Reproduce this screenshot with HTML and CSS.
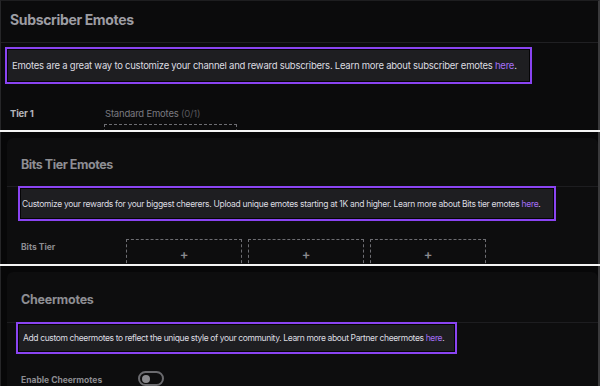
FILE: index.html
```html
<!DOCTYPE html>
<html>
<head>
<meta charset="utf-8">
<link rel="stylesheet" href="styles.css">
</head>
<body>
<div class="page">
  <section class="shot shot-sub">
    <div class="sub-head"><h1 class="sub-title">Subscriber Emotes</h1></div>
    <div class="note note-sub">
      <p class="note-text">Emotes are a great way to customize your channel and reward subscribers. Learn more about subscriber emotes <span class="link">here</span>.</p>
    </div>
    <div class="tier-row">
      <div class="tier-label">Tier 1</div>
      <div class="tier-col">
        <div class="std-label">Standard Emotes <span class="count">(0/1)</span></div>
        <div class="dash-box dash-std"></div>
      </div>
    </div>
  </section>
  <div class="sep"></div>
  <section class="shot shot-bits">
    <div class="card card-bits">
      <div class="card-head head-bits"><h2 class="card-title">Bits Tier Emotes</h2></div>
      <div class="note note-bits">
        <p class="note-text small">Customize your rewards for your biggest cheerers. Upload unique emotes starting at 1K and higher. Learn more about Bits tier emotes <span class="link">here</span>.</p>
      </div>
      <div class="bits-row">
        <div class="row-label">Bits Tier</div>
        <div class="slots">
          <div class="dash-box slot"><span class="plus">+</span></div>
          <div class="dash-box slot"><span class="plus">+</span></div>
          <div class="dash-box slot"><span class="plus">+</span></div>
        </div>
      </div>
    </div>
  </section>
  <div class="sep"></div>
  <section class="shot shot-cheer">
    <div class="card card-cheer">
      <div class="card-head head-cheer"><h2 class="card-title">Cheermotes</h2></div>
      <div class="note note-cheer">
        <p class="note-text smaller">Add custom cheermotes to reflect the unique style of your community. Learn more about Partner cheermotes <span class="link">here</span>.</p>
      </div>
      <div class="cheer-row">
        <div class="row-label">Enable Cheermotes</div>
        <div class="toggle"><span class="knob"></span></div>
      </div>
    </div>
  </section>
</div>
</body>
</html>
```
FILE: styles.css
```css
* { box-sizing: border-box; margin: 0; padding: 0; }
html, body { width: 600px; height: 386px; overflow: hidden; background: #ffffff; }
body { font-family: Inter, "Noto Sans", sans-serif; }
.page { display: flex; flex-direction: column; width: 600px; height: 386px; }
.sep { height: 2px; background: #f4f4f4; flex: none; }
.shot { flex: none; overflow: hidden; background: #0b0b0c; border-right: 2px solid #3a3a3c; border-left: 1px solid #262628; }
.shot-sub { height: 130px; border-top: 1px solid #1e1e20; }
.shot-bits { height: 132px; background: #070708; }
.shot-cheer { height: 120px; background: #070708; }

.sub-head { height: 42px; border-bottom: 1px solid #202023; padding-left: 9px; display: flex; align-items: center; padding-bottom: 4px; }
.sub-title { font-size: 14px; font-weight: 700; color: #9d9da3; letter-spacing: -0.35px; }

.note { border: 2px solid #8a44f2; background: #1e1e21; box-shadow: inset 0 0 0 1px #050506; display: flex; align-items: center; }
.note-sub { margin: 4px 0 0 4px; width: 527px; height: 37px; padding-left: 5px; }
.note-text { font-size: 9.5px; color: #dcdce0; white-space: nowrap; letter-spacing: -0.24px; }
.note-text.small { font-size: 8.5px; letter-spacing: -0.3px; }
.note-text.smaller { font-size: 8.5px; letter-spacing: -0.37px; }
.link { color: #a46ff5; }

.tier-row { display: flex; margin-top: 24px; }
.tier-label { width: 103px; padding-left: 9px; font-size: 9.5px; font-weight: 700; color: #b4b4ba; letter-spacing: -0.2px; }
.tier-col { display: flex; flex-direction: column; }
.std-label { font-size: 9.5px; color: #7a7a80; padding-left: 1px; letter-spacing: -0.2px; }
.count { color: #56565b; }
.dash-box { border: 1px dashed #6d6d72; }
.dash-std { width: 133px; height: 30px; margin-top: 5px; }

.card { background: #0d0d0e; border-radius: 6px; margin-top: 6px; margin-left: 6px; height: 200px; }
.card-head { border-bottom: 1px solid #1d1d20; display: flex; align-items: center; padding-left: 14px; }
.head-bits { height: 49px; padding-top: 4px; }
.head-cheer { height: 51px; padding-top: 5px; }
.card-title { font-size: 12.5px; font-weight: 700; color: #8e8e93; letter-spacing: -0.45px; }
.head-cheer .card-title { letter-spacing: -0.25px; }

.note-bits { margin: -1px 0 0 11px; width: 538px; height: 35px; padding-left: 2px; }
.note-cheer { margin: -1px 0 0 9px; width: 441px; height: 32px; padding-left: 5px; }

.bits-row { display: flex; margin-top: 18px; }
.row-label { font-size: 8.5px; font-weight: 700; color: #8c8c91; padding-left: 14px; }
.bits-row .row-label { width: 119px; padding-top: 3px; }
.slots { display: flex; gap: 6px; }
.slot { width: 116px; height: 40px; display: flex; justify-content: center; padding-top: 8px; }
.plus { color: #8a8a8f; font-size: 13px; font-weight: 600; line-height: 1; }

.cheer-row { display: flex; align-items: flex-start; margin-top: 17px; }
.cheer-row .row-label { width: 131px; padding-top: 4px; }
.toggle { width: 26px; height: 15px; border: 2px solid #6a6a6e; border-radius: 8px; padding: 2px; display: flex; align-items: center; }
.knob { width: 8px; height: 8px; border-radius: 50%; background: #8a8a8e; }
```
